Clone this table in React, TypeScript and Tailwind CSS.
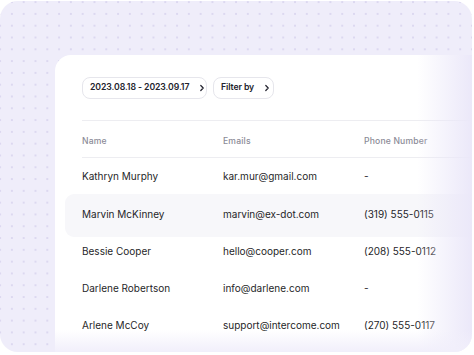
import React from "react";

const rows = [
  { name: "Kathryn Murphy", email: "kar.mur@gmail.com", phone: "-" },
  { name: "Marvin McKinney", email: "marvin@ex-dot.com", phone: "(319) 555-0115", hl: true },
  { name: "Bessie Cooper", email: "hello@cooper.com", phone: "(208) 555-0112" },
  { name: "Darlene Robertson", email: "info@darlene.com", phone: "-" },
  { name: "Arlene McCoy", email: "support@intercome.com", phone: "(270) 555-0117" },
];

function Chevron() {
  return (
    <svg width="6" height="8" viewBox="0 0 6 8" fill="none" className="shrink-0">
      <path d="M1.8 1.5L4.2 4L1.8 6.5" stroke="#2a2a35" strokeWidth="1.3" strokeLinecap="round" strokeLinejoin="round" />
    </svg>
  );
}

export default function App() {
  return (
    <div className="w-[474px] h-[355px] bg-white overflow-hidden" style={{ fontFamily: "Inter, 'Noto Sans', sans-serif" }}>
      <div className="relative mt-[1px] w-[472px] h-[351px] rounded-[18px] bg-[#efedfa] bg-[radial-gradient(circle,#dcd8f0_0.8px,transparent_1.1px)] bg-[size:11.8px_11.8px] bg-[position:6px_7px] overflow-hidden flex flex-col pl-[55px] pt-[54px]">
        <div className="relative flex-1 bg-white rounded-tl-[16px] pl-[27px] pt-[22px] overflow-hidden">
          <div className="flex gap-[6px]">
            <div className="h-[22px] w-[125px] whitespace-nowrap rounded-[8px] border border-[#e6e6ec] flex items-center pl-[7px] gap-[10px] text-[8.7px] font-semibold tracking-[-0.01em] text-[#23232d]">
              <span>2023.08.18 - 2023.09.17</span>
              <Chevron />
            </div>
            <div className="h-[22px] w-[61px] whitespace-nowrap rounded-[8px] border border-[#e6e6ec] flex items-center pl-[7px] gap-[10px] text-[8.7px] font-semibold tracking-[-0.01em] text-[#23232d]">
              <span>Filter by</span>
              <Chevron />
            </div>
          </div>

          <div className="mt-[21px] border-t border-[#ededf1]">
            <div className="grid grid-cols-[141px_141px_1fr] h-[37px] pt-[5px] items-center border-b border-[#ededf1] text-[8.6px] tracking-[0.02em] text-[#8b8b97] font-medium whitespace-nowrap">
              <span>Name</span>
              <span>Emails</span>
              <span>Phone Number</span>
            </div>
            {rows.map((r, i) => (
              <div key={r.name} className={`relative grid grid-cols-[141px_141px_1fr] h-[37.3px] items-center text-[10px] text-[#1f1f29] whitespace-nowrap ${i === 1 || i === 2 ? "pt-[1px]" : ""}`}>
                {r.hl && (
                  <div className="absolute left-[-17px] right-0 top-[-1px] bottom-[-4px] rounded-l-[9px] bg-[#f7f7fa]" />
                )}
                <span className="relative">{r.name}</span>
                <span className="relative">{r.email}</span>
                <span className="relative">{r.phone}</span>
              </div>
            ))}
          </div>

          <div className="absolute right-0 top-0 bottom-0 w-[55px] bg-gradient-to-r from-[#efedfa00] to-[#ebe8f9]" />
          <div className="absolute left-0 right-0 bottom-0 h-[22px] bg-gradient-to-b from-[#f1effb00] to-[#f1effb]" />
        </div>
      </div>
    </div>
  );
}
